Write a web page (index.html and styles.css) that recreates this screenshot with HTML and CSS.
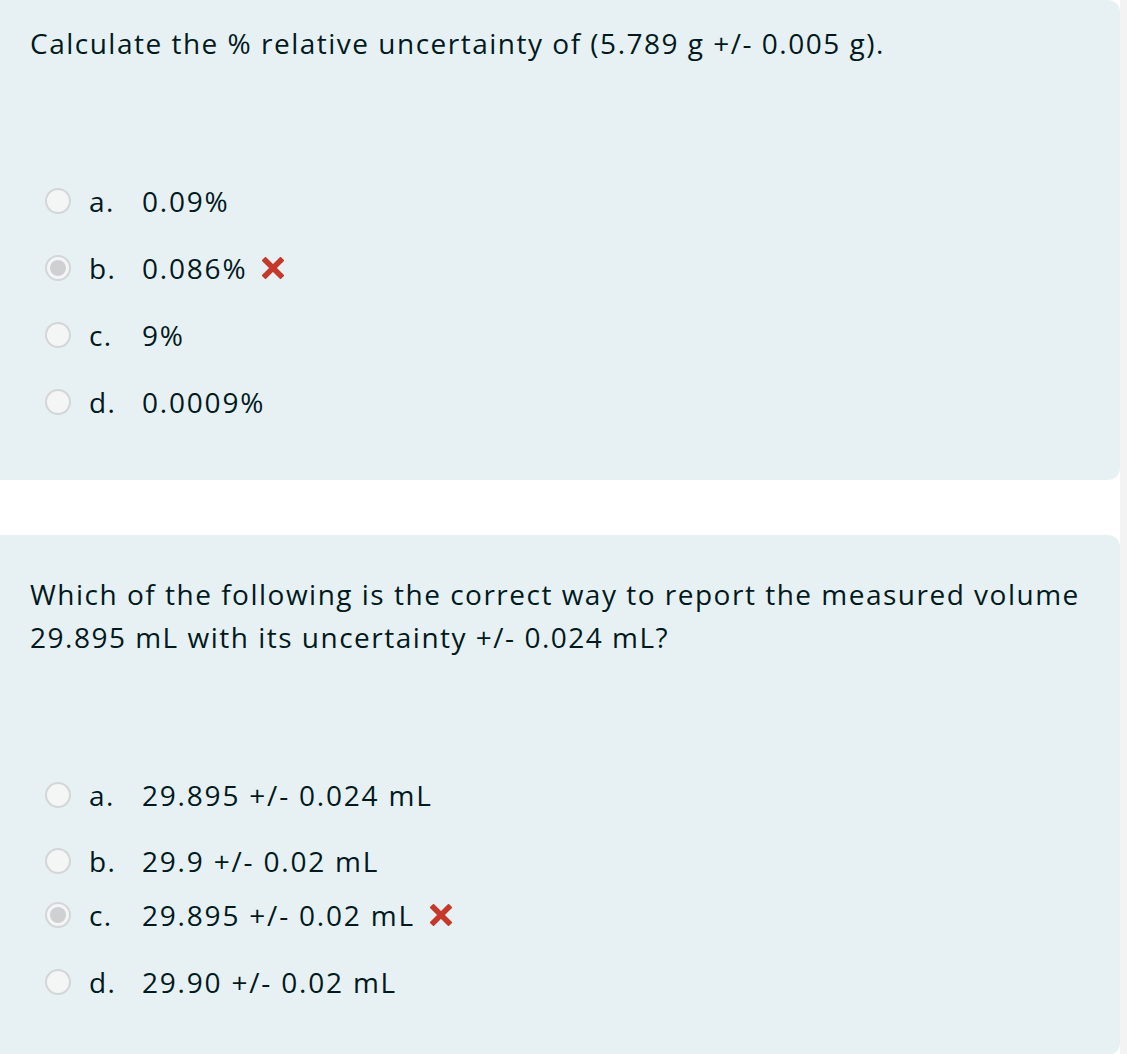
FILE: index.html
```html
<!DOCTYPE html>
<html lang="en">
<head>
<meta charset="utf-8">
<title>Quiz review</title>
<link rel="stylesheet" href="styles.css">
</head>
<body>
<div class="wrap">
  <main class="content">
    <section class="panel panel-first">
      <p class="qtext">Calculate the % relative uncertainty of (5.789 g +/- 0.005 g).</p>
      <div class="answers">
        <div class="opt"><span class="radio"></span><span class="letter">a.</span><span class="ans">0.09%</span></div>
        <div class="opt"><span class="radio checked"></span><span class="letter">b.</span><span class="ans">0.086%</span>
          <svg class="wrong" viewBox="0 0 22 22" aria-hidden="true"><path d="M3.5 3.5 L18.5 18.5 M18.5 3.5 L3.5 18.5" stroke="#c5392a" stroke-width="5.5" stroke-linecap="square"/></svg></div>
        <div class="opt"><span class="radio"></span><span class="letter">c.</span><span class="ans">9%</span></div>
        <div class="opt"><span class="radio"></span><span class="letter">d.</span><span class="ans">0.0009%</span></div>
      </div>
    </section>
    <section class="panel panel-second">
      <p class="qtext">Which of the following is the correct way to report the measured volume 29.895 mL with its uncertainty +/- 0.024 mL?</p>
      <div class="answers">
        <div class="opt"><span class="radio"></span><span class="letter">a.</span><span class="ans">29.895 +/- 0.024 mL</span></div>
        <div class="opt opt-short"><span class="radio"></span><span class="letter">b.</span><span class="ans">29.9 +/- 0.02 mL</span></div>
        <div class="opt opt-tight"><span class="radio checked"></span><span class="letter">c.</span><span class="ans">29.895 +/- 0.02 mL</span>
          <svg class="wrong" viewBox="0 0 22 22" aria-hidden="true"><path d="M3.5 3.5 L18.5 18.5 M18.5 3.5 L3.5 18.5" stroke="#c5392a" stroke-width="5.5" stroke-linecap="square"/></svg></div>
        <div class="opt"><span class="radio"></span><span class="letter">d.</span><span class="ans">29.90 +/- 0.02 mL</span></div>
      </div>
    </section>
  </main>
  <div class="rail"></div>
</div>
</body>
</html>
```
FILE: styles.css
```css
* { box-sizing: border-box; }
html, body { margin: 0; padding: 0; background: #ffffff; }
body {
  font-family: "Open Sans", "Lato", sans-serif;
  color: #001a1e;
  font-size: 28px;
}
.wrap {
  display: flex;
  min-height: 1054px;
}
.content {
  flex: 1;
  display: flex;
  flex-direction: column;
  gap: 55px;
}
.rail {
  width: 7px;
  background: #f3f3f3;
}
.panel {
  background: #e7f1f4;
  border-radius: 0 12px 12px 0;
  padding-left: 30px;
  padding-right: 40px;
}
.panel-first {
  height: 480px;
  padding-top: 22px;
}
.panel-second {
  flex: 1;
  padding-top: 38px;
  padding-bottom: 40px;
}
.qtext {
  margin: 0;
  line-height: 43px;
  letter-spacing: 1.5px;
}
.answers {
  margin-top: 102px;
  display: flex;
  flex-direction: column;
}
.opt {
  height: 67px;
  display: flex;
  align-items: center;
  padding-left: 15px;
  letter-spacing: 1.4px;
}
.opt .ans { letter-spacing: 1.8px; }
.opt-short { height: 66px; }
.opt-tight { height: 54px; padding-bottom: 13px; }
.radio {
  width: 26px;
  height: 26px;
  border-radius: 50%;
  border: 2px solid #d3d6d7;
  background: #f4f5f5;
  display: flex;
  align-items: center;
  justify-content: center;
  flex-shrink: 0;
}
.radio.checked::after {
  content: "";
  width: 16px;
  height: 16px;
  border-radius: 50%;
  background: #cfd0d1;
}
.letter {
  margin-left: 18px;
  width: 53px;
}
.wrong {
  width: 22px;
  height: 22px;
  margin-left: 15px;
}
```
